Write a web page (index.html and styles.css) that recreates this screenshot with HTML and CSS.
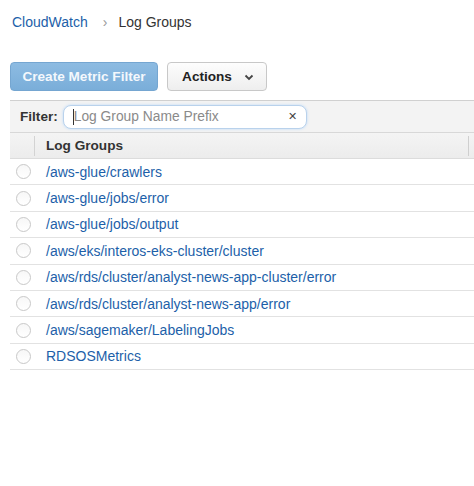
FILE: index.html
```html
<!DOCTYPE html>
<html>
<head>
<meta charset="utf-8">
<link rel="stylesheet" href="styles.css">
</head>
<body>
<div class="page">
  <nav class="crumbs">
    <a class="crumb-link">CloudWatch</a>
    <span class="crumb-sep">›</span>
    <span class="crumb-current">Log Groups</span>
  </nav>
  <div class="toolbar">
    <button class="btn btn-primary">Create Metric Filter</button>
    <button class="btn btn-default">Actions
      <svg class="chev" width="10" height="7" viewBox="0 0 10 7"><path d="M1.5 1.5 L5 5 L8.5 1.5" fill="none" stroke="#444" stroke-width="1.8"/></svg>
    </button>
  </div>
  <div class="panel">
    <div class="filter-bar">
      <span class="filter-label">Filter:</span>
      <div class="filter-input">
        <span class="caret"></span>
        <span class="placeholder">Log Group Name Prefix</span>
        <span class="clear">✕</span>
      </div>
    </div>
    <div class="table-head">
      <div class="th-check"></div>
      <div class="th-name">Log Groups</div>
      <div class="th-end"></div>
    </div>
    <div class="rows">
      <div class="row"><span class="radio"></span><a class="link">/aws-glue/crawlers</a></div>
      <div class="row"><span class="radio"></span><a class="link">/aws-glue/jobs/error</a></div>
      <div class="row"><span class="radio"></span><a class="link">/aws-glue/jobs/output</a></div>
      <div class="row"><span class="radio"></span><a class="link">/aws/eks/interos-eks-cluster/cluster</a></div>
      <div class="row"><span class="radio"></span><a class="link">/aws/rds/cluster/analyst-news-app-cluster/error</a></div>
      <div class="row"><span class="radio"></span><a class="link">/aws/rds/cluster/analyst-news-app/error</a></div>
      <div class="row"><span class="radio"></span><a class="link">/aws/sagemaker/LabelingJobs</a></div>
      <div class="row"><span class="radio"></span><a class="link">RDSOSMetrics</a></div>
    </div>
  </div>
</div>
</body>
</html>
```

FILE: styles.css
```css
* { box-sizing: border-box; }
html, body { margin: 0; padding: 0; background: #fff; }
body {
  font-family: "Liberation Sans", Arial, Helvetica, sans-serif;
  color: #333;
  overflow: hidden;
}
.page {
  padding: 0 0 0 10px;
  width: 474px;
}
.crumbs {
  display: flex;
  align-items: center;
  height: 43px;
  padding-left: 2px;
  font-size: 14px;
}
.crumb-link { color: #1d5fa9; }
.crumb-sep { color: #999; margin: 0 11px 0 15px; font-size: 14px; }
.crumb-current { color: #333; }
.toolbar {
  display: flex;
  gap: 9px;
  margin-top: 19px;
  height: 29px;
}
.btn {
  font-family: inherit;
  font-weight: bold;
  font-size: 13.6px;
  border-radius: 4px;
  height: 29px;
  padding: 0;
  display: flex;
  align-items: center;
  justify-content: center;
}
.btn-primary {
  width: 148px;
  color: #f4f8fc;
  background: linear-gradient(#8dbbe2, #7aaed9);
  border: 1px solid #75a6d1;
}
.btn-default {
  width: 100px;
  color: #222;
  background: linear-gradient(#fdfdfd, #eeeeee);
  border: 1px solid #c8c8c8;
  gap: 12px;
  padding-left: 2px;
}
.chev { margin-top: 1px; }
.panel {
  margin-top: 9px;
  width: 464px;
}
.filter-bar {
  display: flex;
  align-items: center;
  height: 33px;
  background: #f3f3f3;
  border-top: 1px solid #d0d0d0;
  border-bottom: 1px solid #d8d8d8;
  padding-left: 10px;
}
.filter-label {
  font-weight: bold;
  font-size: 13.6px;
  color: #333;
  margin-right: 5px;
}
.filter-input {
  position: relative;
  display: flex;
  align-items: center;
  width: 244px;
  height: 24px;
  background: #fff;
  border: 1px solid #b9d2ec;
  border-radius: 8px;
  box-shadow: 0 0 2px 1px #d9e7f6;
  padding-left: 9px;
}
.caret {
  width: 1px;
  height: 16px;
  background: #333;
}
.placeholder {
  color: #8a8a8a;
  font-size: 13.8px;
}
.clear {
  margin-left: auto;
  margin-right: 9px;
  font-size: 11px;
  color: #444;
}
.table-head {
  display: flex;
  align-items: center;
  height: 26px;
  background: linear-gradient(#f4f4f4, #ececec);
  border-bottom: 1px solid #dcdcdc;
}
.th-check {
  width: 25px;
  height: 20px;
  border-right: 1px solid #d3d3d3;
}
.th-name {
  flex: 1;
  font-weight: bold;
  font-size: 13.6px;
  padding-left: 11px;
  color: #333;
}
.th-end {
  width: 1px;
  height: 20px;
  background: #cfcfcf;
  margin-right: 5px;
}
.row {
  display: flex;
  align-items: center;
  height: 26.4px;
  border-bottom: 1px solid #e2e2e2;
}
.radio {
  width: 15px;
  height: 15px;
  border: 1px solid #c8c8c8;
  border-radius: 50%;
  margin-left: 6px;
  margin-right: 15px;
  background: linear-gradient(#f7f7f7, #ffffff);
}
.link {
  color: #1d5fa9;
  font-size: 14px;
  white-space: nowrap;
}
```
